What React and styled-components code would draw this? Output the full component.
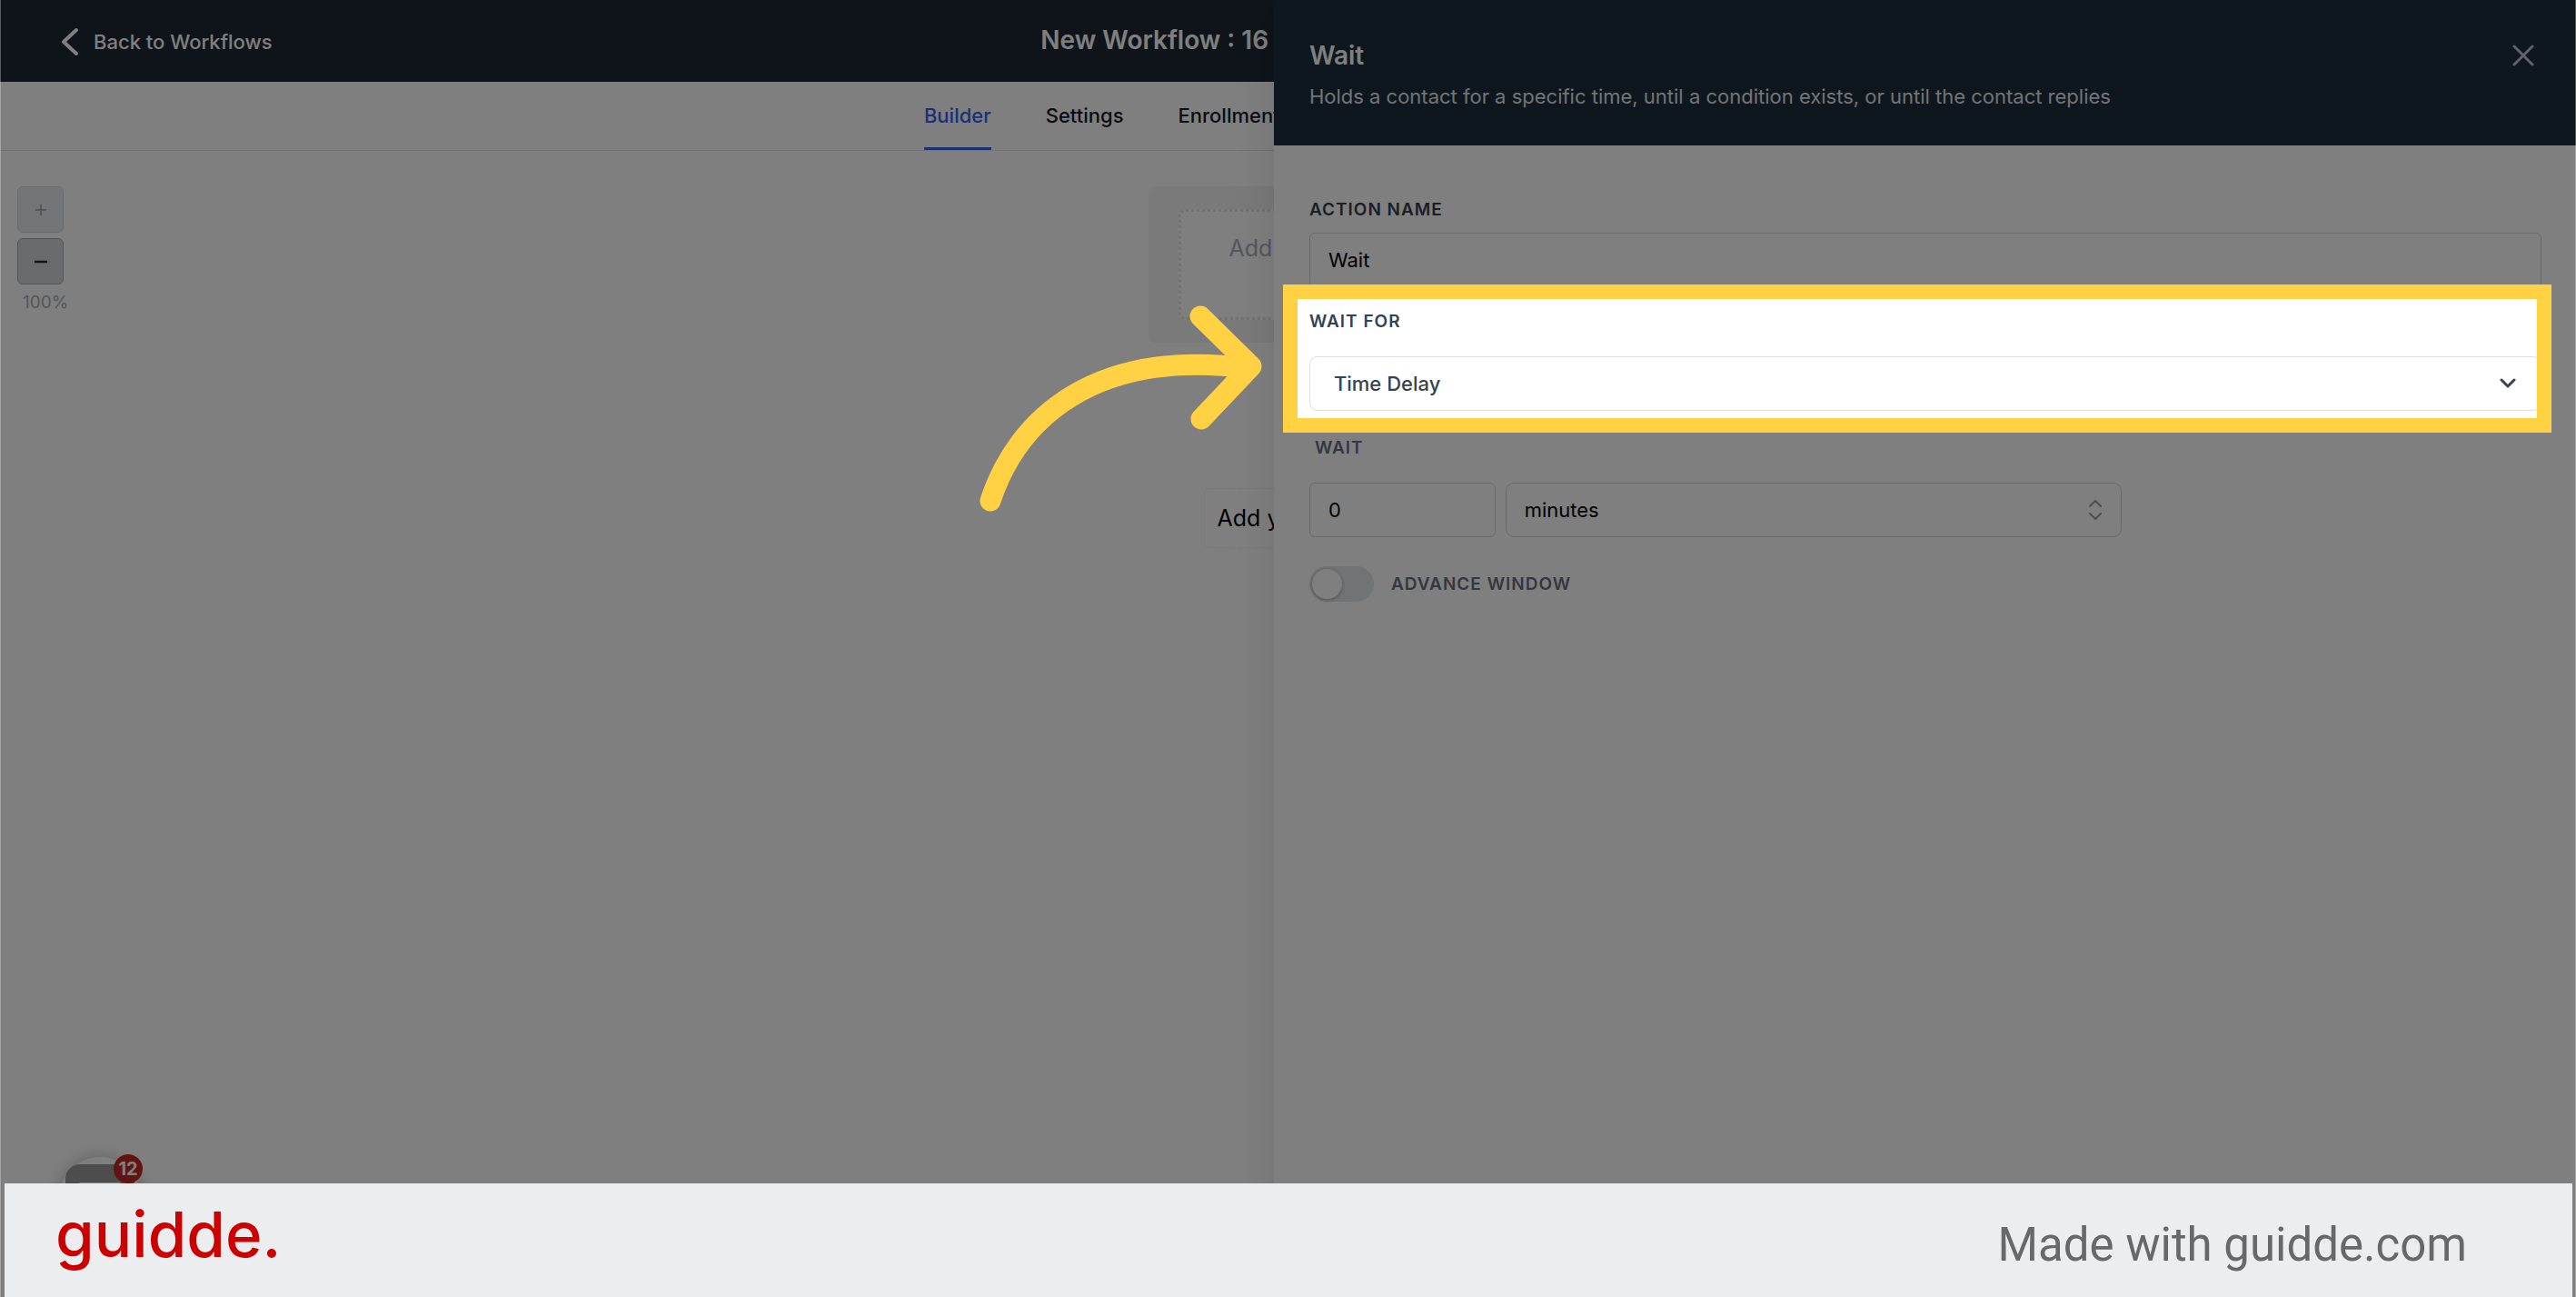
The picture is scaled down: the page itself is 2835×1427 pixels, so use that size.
import React from 'react';
import styled, { createGlobalStyle } from 'styled-components';

const GlobalStyle = createGlobalStyle`
    *{
        box-sizing: border-box;
    }
    body{
        margin: 0;
        font-family: Inter, "Liberation Sans", sans-serif;
        font-size: 22px;
        line-height: 32px;
        color: #111827;
    }
    button, input, select{
        font: inherit;
        color: inherit;
        margin: 0;
    }
`;

const PageStyle = styled.div`
    position: relative;
    display: flex;
    flex-direction: column;
    min-height: 100vh;
    overflow: hidden;
    background: #fff;
    /* thin light edge on both sides of the window */
    &::after{
        content: '';
        position: absolute;
        inset: 0;
        z-index: 30;
        border: solid rgba(255, 255, 255, 0.3);
        border-width: 0 1px;
        pointer-events: none;
    }
`;

const TopBar = styled.header`
    display: grid;
    grid-template-columns: 40.4% 1fr;
    align-items: center;
    height: 90px;
    background: #1f2937;
    color: #fff;
`;

const BackLink = styled.a`
    display: flex;
    align-items: center;
    gap: 16px;
    padding: 2px 0 0 67px;
    color: inherit;
    font-weight: 500;
    text-decoration: none;
`;

const WorkflowTitle = styled.h1`
    margin: 0;
    padding-bottom: 2px;
    font-size: 28px;
    font-weight: 600;
    white-space: nowrap;
`;

const Tabs = styled.nav`
    display: flex;
    gap: 60px;
    height: 76px;
    padding-left: 35.87%;
    border-bottom: 1px solid #e5e7eb;
`;

const Tab = styled.a`
    padding-top: 21px;
    border-bottom: 3px solid ${(props) => (props.$active ? '#3463f0' : 'transparent')};
    color: ${(props) => (props.$active ? '#3463f0' : '#111827')};
    font-weight: 500;
    text-decoration: none;
`;

const Canvas = styled.main`
    position: relative;
    flex: 1;
    display: flex;
    flex-direction: column;
    align-items: center;
    gap: 160px;
    padding-top: 39px;
    overflow: hidden;
`;

const ZoomControls = styled.div`
    position: absolute;
    top: 39px;
    left: 19px;
    display: flex;
    flex-direction: column;
    gap: 6px;
    font-size: 19px;
    line-height: 24px;
    color: #a9aeb8;
    span{
        padding: 2px 0 0 6px;
    }
`;

const ZoomButton = styled.button`
    display: grid;
    place-items: center;
    width: 51px;
    height: 51px;
    padding: 0;
    border: 1px solid ${(props) => (props.disabled ? '#d5d7da' : '#a9abb6')};
    border-radius: 6px;
    background: ${(props) => (props.disabled ? '#e8eaed' : '#d5d7db')};
    color: ${(props) => (props.disabled ? '#9a9ca0' : '#1f2937')};
`;

const TriggerBox = styled.div`
    width: 308px;
    padding: 25px 33px;
    border-radius: 8px;
    background: #f4f4f4;
`;

const TriggerSlot = styled.div`
    height: 122px;
    padding: 24px 53px;
    border: 3px dotted #e3e4e6;
    border-radius: 8px;
    background: #fff;
    color: #a9aeb8;
    font-size: 25px;
    white-space: nowrap;
`;

const ActionButton = styled.button`
    width: 186px;
    height: 66px;
    padding: 0 14px;
    border: 1px solid #f3f4f6;
    border-radius: 6px;
    background: #fff;
    color: #000;
    font-size: 25px;
    text-align: left;
    white-space: nowrap;
    overflow: hidden;
`;

const ChatButton = styled.button`
    position: absolute;
    left: 65px;
    bottom: -61px;
    width: 90px;
    height: 90px;
    padding: 0;
    border: 0;
    border-radius: 50%;
    background: #fff;
    box-shadow: 0 2px 20px rgba(0, 0, 0, 0.3);
    svg{
        display: block;
    }
`;

const ChatBadge = styled.span`
    position: absolute;
    top: -3px;
    left: 60px;
    width: 32px;
    height: 32px;
    border-radius: 50%;
    background: #c4281e;
    color: #fff;
    font-size: 20px;
    font-weight: 700;
    text-align: center;
`;

const DrawerStyle = styled.aside`
    position: absolute;
    top: 0;
    right: 0;
    bottom: 0;
    left: 49.45%;
    z-index: 10;
    background: #fff;
    box-shadow: 0 0 50px rgba(0, 0, 0, 0.12);
`;

const DrawerHeader = styled.div`
    display: flex;
    justify-content: space-between;
    align-items: flex-start;
    height: 160px;
    padding: 45px 38px 0 39px;
    background: #1a2e3b;
    color: #fff;
    h2{
        margin: 0;
        font-size: 28px;
        font-weight: 600;
    }
    p{
        margin: 13px 0 0;
        color: #e5e7eb;
    }
`;

const CloseButton = styled.button`
    display: grid;
    place-items: center;
    width: 40px;
    height: 32px;
    padding: 0;
    border: 0;
    background: none;
    color: #c3c3d4;
`;

const DrawerForm = styled.form`
    display: flex;
    flex-direction: column;
    gap: 26px;
    padding: 59px 38px 59px 39px;
`;

const Field = styled.div`
    position: relative;
    display: flex;
    flex-direction: column;
    gap: ${(props) => props.$gap || 26}px;
    padding-bottom: ${(props) => (props.$gap ? 0 : 3)}px;
`;

const Label = styled.label`
    padding-left: ${(props) => (props.$muted ? 6 : 0)}px;
    color: ${(props) => (props.$muted ? '#6b7080' : '#374151')};
    font-size: 19px;
    font-weight: 600;
    line-height: 24px;
    letter-spacing: 1px;
`;

const TextInput = styled.input`
    width: ${(props) => props.$width || '100%'};
    height: 60px;
    padding: 0 20px;
    border: 1px solid #d5d7db;
    border-radius: 6px;
    background: #fff;
    color: #000;
`;

const SelectBox = styled.div`
    position: relative;
    flex: ${(props) => (props.$width ? 'none' : '1')};
    width: ${(props) => props.$width || '100%'};
    svg{
        position: absolute;
        top: 50%;
        right: ${(props) => props.$iconRight}px;
        transform: translateY(-50%);
        pointer-events: none;
    }
`;

const Select = styled.select`
    display: block;
    appearance: none;
    width: 100%;
    height: 60px;
    padding: 0 ${(props) => (props.$strong ? 26 : 20)}px;
    border: 1px solid ${(props) => (props.$strong ? '#dcdfe4' : '#d5d7db')};
    border-radius: 9px;
    background: #fff;
    color: ${(props) => (props.$strong ? '#374151' : '#000')};
    font-weight: ${(props) => (props.$strong ? 500 : 400)};
`;

const DelayRow = styled.div`
    display: flex;
    gap: 11px;
`;

const ToggleRow = styled.div`
    display: flex;
    align-items: center;
    gap: 13px;
    padding-top: 3px;
`;

const Toggle = styled.input`
    appearance: none;
    width: 71px;
    height: 39px;
    border-radius: 20px;
    background: #e5e7eb;
    &::before{
        content: '';
        display: block;
        width: 33px;
        height: 33px;
        margin: 3px;
        border-radius: 50%;
        background: #fff;
        box-shadow: 0 1px 4px rgba(0, 0, 0, 0.3);
    }
    &:checked::before{
        margin-left: 35px;
    }
`;

// The large spread shadow dims everything outside of the frame
const Spotlight = styled.div`
    position: absolute;
    inset: -29px -11px -21px -29px;
    z-index: 5;
    border: 16px solid #ffd143;
    box-shadow: 0 0 0 4000px rgba(0, 0, 0, 0.5);
    pointer-events: none;
    svg{
        position: absolute;
        right: calc(100% + 38px);
        top: 6px;
    }
`;

const FooterStyle = styled.footer`
    position: relative;
    z-index: 20;
    display: flex;
    justify-content: space-between;
    align-items: center;
    height: 125px;
    margin: 0 4px 0 5px;
    padding: 0 116px 0 56px;
    background: #ecedef;
`;

const Brand = styled.span`
    padding-bottom: 14px;
    color: #c00;
    font-size: 69px;
    font-weight: 500;
    line-height: 80px;
`;

const MadeWith = styled.span`
    padding-top: 10px;
    color: #66686b;
    font-family: Roboto, sans-serif;
    font-size: 51px;
    line-height: 60px;
`;

function Drawer() {
    return (
        <DrawerStyle>
            <DrawerHeader>
                <div>
                    <h2>Wait</h2>
                    <p>Holds a contact for a specific time, until a condition exists, or until the contact replies</p>
                </div>
                <CloseButton type="button" aria-label="Close">
                    <svg width="24" height="24" viewBox="0 0 24 24" fill="none" stroke="currentColor" strokeWidth="3" strokeLinecap="round">
                        <path d="M2 2L22 22M22 2L2 22" />
                    </svg>
                </CloseButton>
            </DrawerHeader>
            <DrawerForm>
                <Field $gap={13}>
                    <Label htmlFor="action-name">ACTION NAME</Label>
                    <TextInput id="action-name" type="text" defaultValue="Wait" />
                </Field>
                <Field>
                    <Label htmlFor="wait-for">WAIT FOR</Label>
                    <SelectBox $iconRight={28}>
                        <Select id="wait-for" $strong>
                            <option>Time Delay</option>
                        </Select>
                        <svg width="18" height="12" viewBox="0 0 18 12" fill="none" stroke="#374151" strokeWidth="3" strokeLinecap="round" strokeLinejoin="round">
                            <path d="M2 2L9 9L16 2" />
                        </svg>
                    </SelectBox>
                    <Spotlight>
                        <svg width="314" height="228" viewBox="1076 335 314 228" fill="none" stroke="#ffd143" strokeWidth="23" strokeLinecap="round" strokeLinejoin="round">
                            <path d="M1090 551C1120 460 1205 383 1374 405" />
                            <path d="M1321 348L1377 403L1322 461" />
                        </svg>
                    </Spotlight>
                </Field>
                <Field>
                    <Label htmlFor="wait-amount" $muted>WAIT</Label>
                    <DelayRow>
                        <TextInput id="wait-amount" type="text" defaultValue="0" $width="15.1%" />
                        <SelectBox $width="50%" $iconRight={22}>
                            <Select aria-label="Wait unit">
                                <option>minutes</option>
                            </Select>
                            <svg width="15" height="24" viewBox="0 0 15 24" fill="none" stroke="#9a9ca6" strokeWidth="2" strokeLinecap="round" strokeLinejoin="round">
                                <path d="M2 8L8 2L14 8M2 16L8 22L14 16" />
                            </svg>
                        </SelectBox>
                    </DelayRow>
                </Field>
                <ToggleRow>
                    <Toggle id="advance-window" type="checkbox" />
                    <Label htmlFor="advance-window" $muted>ADVANCE WINDOW</Label>
                </ToggleRow>
            </DrawerForm>
        </DrawerStyle>
    );
}

export default function App() {
    return (
        <PageStyle>
            <GlobalStyle />
            <TopBar>
                <BackLink href="#workflows">
                    <svg width="20" height="32" viewBox="0 0 20 32" fill="none" stroke="currentColor" strokeWidth="4" strokeLinecap="round" strokeLinejoin="round">
                        <path d="M17 3L3 16L17 29" />
                    </svg>
                    Back to Workflows
                </BackLink>
                <WorkflowTitle>New Workflow : 16</WorkflowTitle>
            </TopBar>
            <Tabs>
                <Tab href="#builder" $active>Builder</Tab>
                <Tab href="#settings">Settings</Tab>
                <Tab href="#enrollment">Enrollment</Tab>
            </Tabs>
            <Canvas>
                <ZoomControls>
                    <ZoomButton type="button" aria-label="Zoom in" disabled>
                        <svg width="14" height="14" viewBox="0 0 14 14" stroke="currentColor" strokeWidth="1.5">
                            <path d="M7 1V13M1 7H13" />
                        </svg>
                    </ZoomButton>
                    <ZoomButton type="button" aria-label="Zoom out">
                        <svg width="14" height="14" viewBox="0 0 14 14" stroke="currentColor" strokeWidth="2.5">
                            <path d="M0 7H14" />
                        </svg>
                    </ZoomButton>
                    <span>100%</span>
                </ZoomControls>
                <TriggerBox>
                    <TriggerSlot>Add New</TriggerSlot>
                </TriggerBox>
                <ActionButton type="button">Add your first</ActionButton>
                <ChatButton type="button" aria-label="Open chat">
                    <svg width="90" height="90" viewBox="0 0 90 90">
                        <rect x="7" y="8" width="76" height="62" rx="16" fill="#9a9a9a" />
                        <rect x="22" y="28" width="46" height="8" rx="2" fill="#fff" />
                    </svg>
                    <ChatBadge>12</ChatBadge>
                </ChatButton>
            </Canvas>
            <Drawer />
            <FooterStyle>
                <Brand>guidde.</Brand>
                <MadeWith>Made with guidde.com</MadeWith>
            </FooterStyle>
        </PageStyle>
    );
}
